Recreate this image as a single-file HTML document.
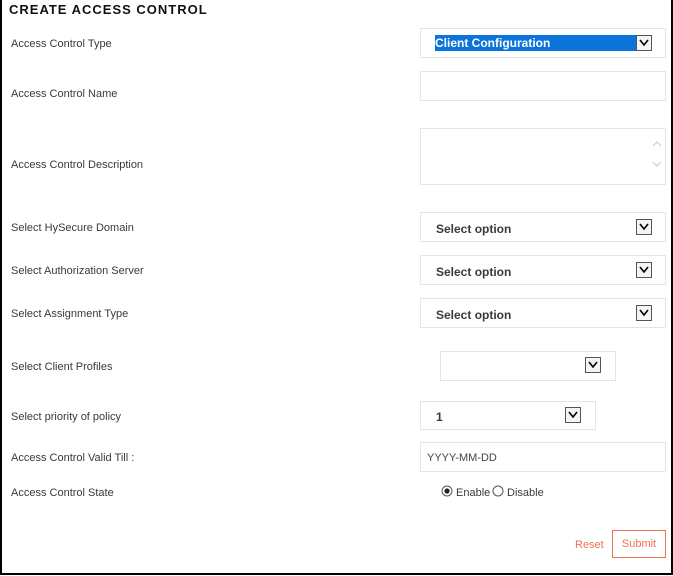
<!DOCTYPE html>
<html><head><style>
body{margin:0;width:673px;height:576px;background:#fff;font-family:"Liberation Sans",sans-serif;position:relative;overflow:hidden}
.frame{position:absolute;left:0;top:-2px;width:669px;height:573px;border:2px solid #000}
.a{position:absolute}
.lbl{position:absolute;left:11px;font-size:11px;color:#3a3a3a;line-height:13px}
.box{position:absolute;border:1px solid #e8e4e0;background:#fff;box-sizing:border-box}
.arr{position:absolute;width:16px;height:16px;border:1px solid #555;box-sizing:border-box;background:#f4f4f4}
.arr svg{position:absolute;left:2px;top:3px}
.st{position:absolute;font-size:12px;font-weight:bold;color:#3a3a3a}
</style></head><body>
<div class="frame"></div>
<div class="a" style="left:9px;top:2px;font-size:13px;font-weight:bold;letter-spacing:1px;color:#111">CREATE ACCESS CONTROL</div>

<div class="lbl" style="top:38px">Access Control Type</div>
<div class="box" style="left:420px;top:28px;width:246px;height:30px"></div>
<div class="a" style="left:435px;top:35px;width:201px;height:16px;background:#0a74da;color:#fff;font-size:12px;font-weight:bold;line-height:17px">Client Configuration</div>
<div class="arr" style="left:636px;top:35px"><svg width="10" height="8"><path d="M1 1L5 6L9 1" stroke="#000" stroke-width="1.6" fill="none"/></svg></div>

<div class="lbl" style="top:88px">Access Control Name</div>
<div class="box" style="left:420px;top:71px;width:246px;height:30px"></div>

<div class="lbl" style="top:159px">Access Control Description</div>
<div class="box" style="left:420px;top:128px;width:246px;height:57px"></div>
<svg class="a" style="left:651px;top:140px" width="12" height="32"><path d="M2 6L6 2L10 6M2 22L6 26L10 22" stroke="#ccc" stroke-width="1.2" fill="none"/></svg>

<div class="lbl" style="top:222px">Select HySecure Domain</div>
<div class="box" style="left:420px;top:212px;width:246px;height:30px"></div>
<div class="st" style="left:436px;top:222px">Select option</div>
<div class="arr" style="left:636px;top:219px"><svg width="10" height="8"><path d="M1 1L5 6L9 1" stroke="#000" stroke-width="1.6" fill="none"/></svg></div>

<div class="lbl" style="top:265px">Select Authorization Server</div>
<div class="box" style="left:420px;top:255px;width:246px;height:30px"></div>
<div class="st" style="left:436px;top:265px">Select option</div>
<div class="arr" style="left:636px;top:262px"><svg width="10" height="8"><path d="M1 1L5 6L9 1" stroke="#000" stroke-width="1.6" fill="none"/></svg></div>

<div class="lbl" style="top:308px">Select Assignment Type</div>
<div class="box" style="left:420px;top:298px;width:246px;height:30px"></div>
<div class="st" style="left:436px;top:308px">Select option</div>
<div class="arr" style="left:636px;top:305px"><svg width="10" height="8"><path d="M1 1L5 6L9 1" stroke="#000" stroke-width="1.6" fill="none"/></svg></div>

<div class="lbl" style="top:361px">Select Client Profiles</div>
<div class="box" style="left:440px;top:351px;width:176px;height:30px"></div>
<div class="arr" style="left:585px;top:357px"><svg width="10" height="8"><path d="M1 1L5 6L9 1" stroke="#000" stroke-width="1.6" fill="none"/></svg></div>

<div class="lbl" style="top:411px">Select priority of policy</div>
<div class="box" style="left:420px;top:401px;width:176px;height:29px"></div>
<div class="st" style="left:436px;top:410px">1</div>
<div class="arr" style="left:565px;top:407px"><svg width="10" height="8"><path d="M1 1L5 6L9 1" stroke="#000" stroke-width="1.6" fill="none"/></svg></div>

<div class="lbl" style="top:452px">Access Control Valid Till :</div>
<div class="box" style="left:420px;top:442px;width:246px;height:30px"></div>
<div class="a" style="left:427px;top:452px;font-size:11px;color:#444">YYYY-MM-DD</div>

<div class="lbl" style="top:487px">Access Control State</div>
<svg class="a" style="left:441px;top:485px" width="12" height="12"><circle cx="6" cy="6" r="5" fill="#fff" stroke="#555"/><circle cx="6" cy="6" r="2.6" fill="#222"/></svg>
<div class="a" style="left:456px;top:487px;font-size:11px;color:#3a3a3a">Enable</div>
<svg class="a" style="left:492px;top:485px" width="12" height="12"><circle cx="6" cy="6" r="5" fill="#fff" stroke="#555"/></svg>
<div class="a" style="left:507px;top:487px;font-size:11px;color:#3a3a3a">Disable</div>

<div class="a" style="left:575px;top:539px;font-size:11px;color:#f07050">Reset</div>
<div class="a" style="left:612px;top:530px;width:54px;height:28px;border:1px solid #f07050;box-sizing:border-box;color:#f07050;font-size:11px;text-align:center;line-height:27px">Submit</div>
</body></html>
